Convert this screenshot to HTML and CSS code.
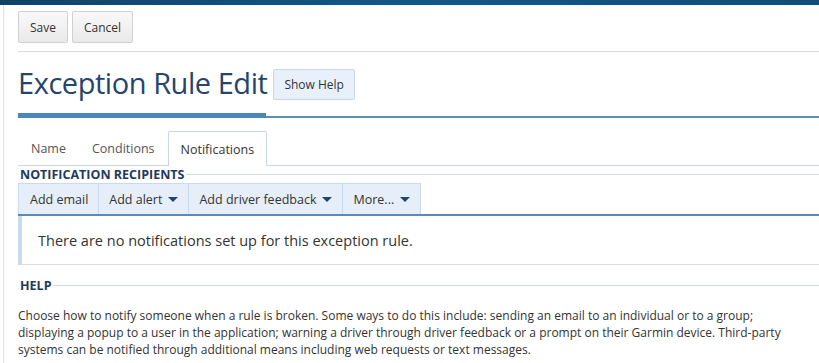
FILE: index.html
```html
<!DOCTYPE html>
<html>
<head>
<meta charset="utf-8">
<link rel="stylesheet" href="styles.css">
</head>
<body>
<div class="topbar"></div>
<div class="layout">
  <div class="sidebar"></div>
  <div class="main">
    <div class="actions">
      <button class="btn">Save</button>
      <button class="btn">Cancel</button>
    </div>
    <div class="title-row">
      <h1 class="title">Exception Rule Edit</h1>
      <button class="help-btn">Show Help</button>
    </div>
    <div class="underline">
      <div class="thick"></div>
      <div class="thin"></div>
    </div>
    <div class="tabs">
      <div class="tab">Name</div>
      <div class="tab">Conditions</div>
      <div class="tab active">Notifications</div>
    </div>
    <div class="section-head">
      <span class="section-title">NOTIFICATION RECIPIENTS</span>
      <span class="section-line"></span>
    </div>
    <div class="rec-bar">
      <div class="rec-group">
        <div class="rec-btn">Add email</div>
        <div class="rec-btn">Add alert <span class="caret"></span></div>
        <div class="rec-btn">Add driver feedback <span class="caret"></span></div>
        <div class="rec-btn">More... <span class="caret"></span></div>
      </div>
    </div>
    <div class="message">There are no notifications set up for this exception rule.</div>
    <div class="section-head help-head">
      <span class="section-title">HELP</span>
      <span class="section-line"></span>
    </div>
    <p class="help-text">Choose how to notify someone when a rule is broken. Some ways to do this include: sending an email to an individual or to a group; displaying a popup to a user in the application; warning a driver through driver feedback or a prompt on their Garmin device. Third-party systems can be notified through additional means including web requests or text messages.</p>
  </div>
</div>
</body>
</html>
```
FILE: styles.css
```css
* { box-sizing: border-box; }
html, body { margin: 0; padding: 0; background: #fff; }
body {
  font-family: "Open Sans", "Noto Sans", sans-serif;
  color: #333;
  overflow: hidden;
  height: 363px;
}
.topbar {
  height: 5px;
  background: linear-gradient(90deg, #0d4468 0%, #11588a 50%, #0f4e7c 100%);
}
.layout { display: flex; }
.sidebar {
  width: 4px;
  border-right: 1px solid #e4e4e4;
  min-height: 358px;
  flex: none;
}
.main {
  flex: 1;
  padding-left: 14px;
}
.actions {
  display: flex;
  gap: 4px;
  padding: 6px 0 8px;
  border-bottom: 1px solid #dcdcdc;
}
.btn {
  font-family: inherit;
  font-size: 12px;
  color: #333;
  height: 32px;
  padding: 0 11px;
  border: 1px solid #d0d0d0;
  border-radius: 2px;
  background: linear-gradient(#f9f9f9, #e9e9e9);
}
.title-row {
  display: flex;
  align-items: center;
  gap: 6px;
  height: 61px;
}
.title {
  margin: 0;
  font-size: 29px;
  font-weight: 400;
  color: #26456d;
  letter-spacing: -0.45px;
}
.help-btn {
  font-family: inherit;
  font-size: 12px;
  color: #333;
  height: 31px;
  padding: 0 10px;
  border: 1px solid #c6d8ec;
  border-radius: 2px;
  background: #e8f1fb;
  margin-top: 3px;
}
.underline {
  display: flex;
  align-items: flex-end;
  height: 5px;
}
.thick { width: 248px; height: 5px; background: #4a87bd; }
.thin { flex: 1; height: 2px; background: #5b8fb4; }
.tabs {
  display: flex;
  margin-top: 13px;
  border-bottom: 1px solid #c9d8e3;
  height: 35px;
}
.tab {
  font-size: 12.5px;
  color: #555;
  padding: 0 12px;
  display: flex;
  align-items: center;
  border: 1px solid transparent;
  border-bottom: none;
}
.tab.active {
  color: #333;
  border-color: #c6d6e2;
  background: #fff;
  margin-bottom: -1px;
  border-radius: 2px 2px 0 0;
}
.section-head {
  display: flex;
  align-items: center;
  gap: 2px;
  height: 17px;
  padding-left: 2px;
}
.section-title {
  font-size: 12.5px;
  font-weight: 700;
  color: #1e3a5e;
}
.section-line {
  flex: 1;
  height: 1px;
  background: #ccdbe6;
}
.rec-bar {
  border-bottom: 2px solid #5b8ab4;
  display: flex;
}
.rec-group {
  display: flex;
  background: #e6eff9;
  border: 1px solid #c8daec;
  border-bottom: none;
  height: 31px;
}
.rec-btn {
  font-size: 12.5px;
  color: #333;
  display: flex;
  align-items: center;
  padding: 0 10px;
  border-left: 1px solid #c8daec;
}
.rec-btn:first-child { border-left: none; padding-left: 11px; }
.caret {
  display: inline-block;
  width: 0; height: 0;
  border-left: 5px solid transparent;
  border-right: 5px solid transparent;
  border-top: 5px solid #23456b;
  margin-left: 6px;
}
.message {
  height: 49px;
  border-left: 4px solid #c9dcee;
  border-bottom: 1px solid #dcdcdc;
  padding-left: 16px;
  display: flex;
  align-items: center;
  font-size: 14.5px;
  color: #333;
}
.help-head {
  margin-top: 12px;
}
.help-text {
  margin: 13px 0 0;
  font-size: 12px;
  line-height: 17px;
  color: #333;
  padding-right: 8px;
}
```
